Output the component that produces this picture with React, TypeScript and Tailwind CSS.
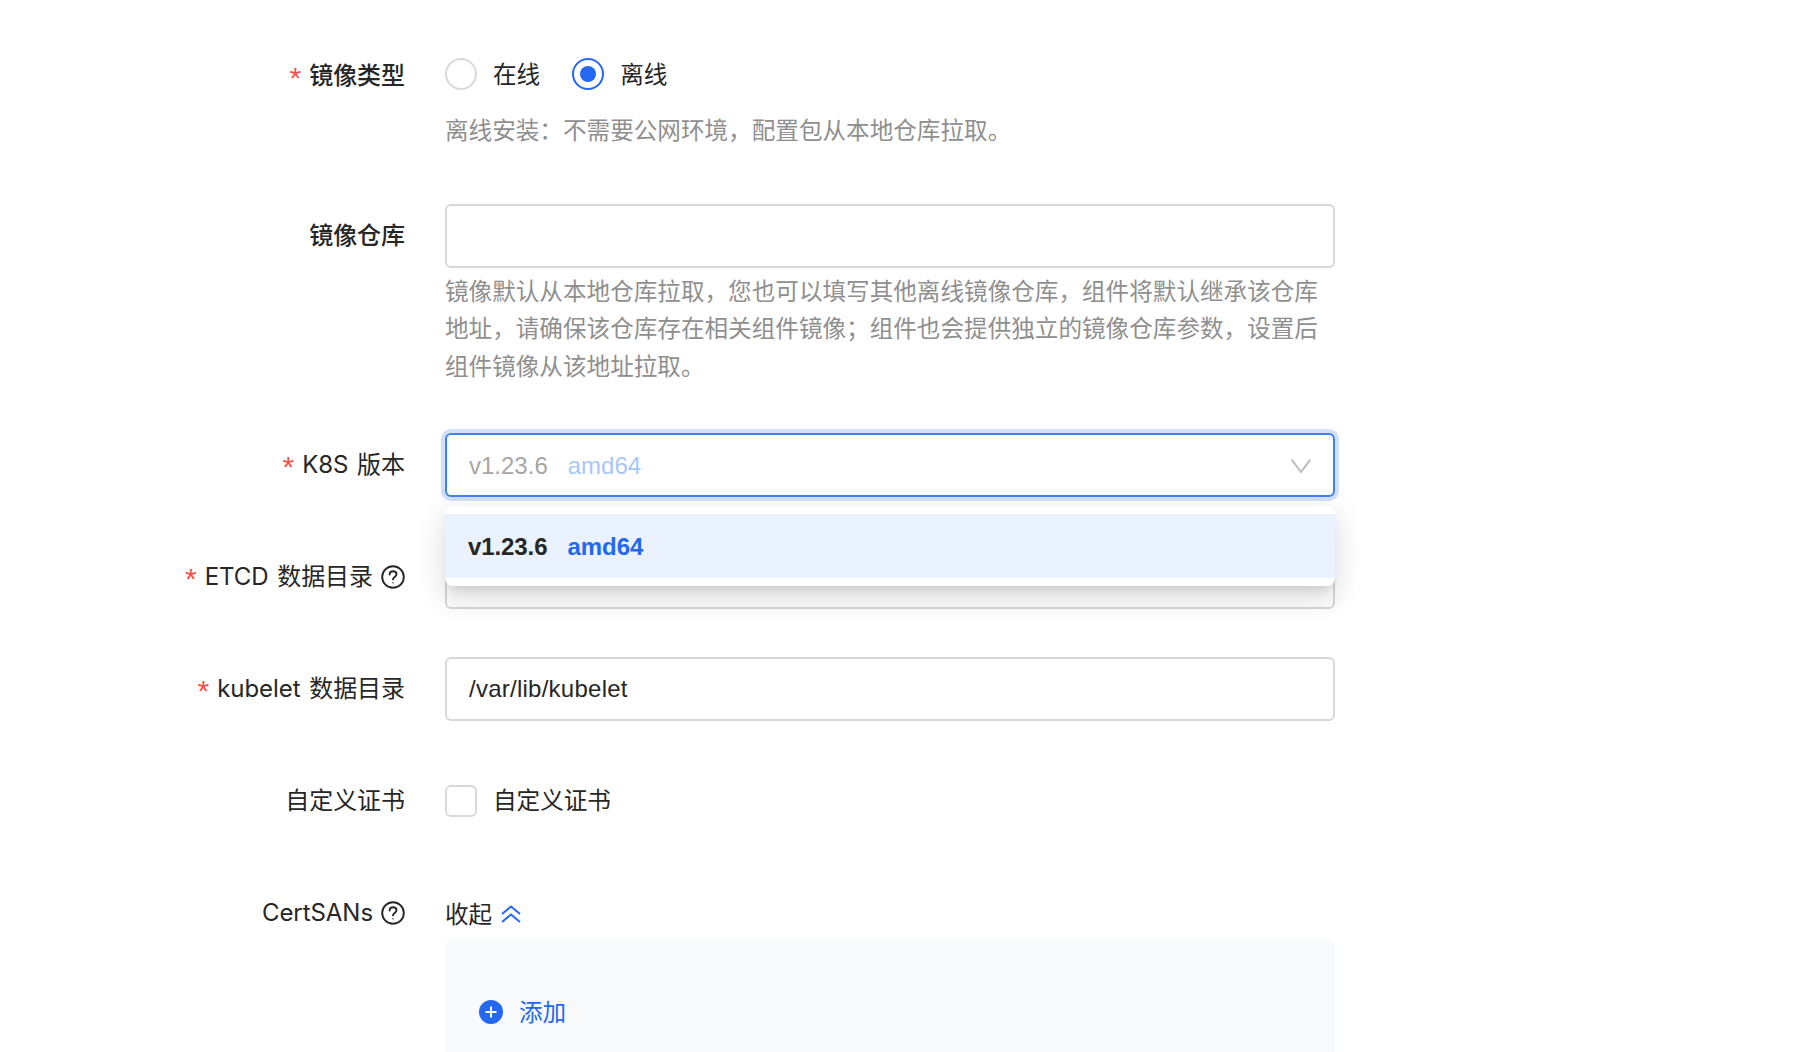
const helpIcon = (
  <svg width="24" height="24" viewBox="0 0 24 24" fill="none" stroke="#262626" strokeWidth="1.9" className="ml-[8px] shrink-0">
    <circle cx="12" cy="12" r="10.8" />
    <path d="M8.6 9.6c0-2 1.5-3.3 3.5-3.3s3.4 1.2 3.4 3c0 2.6-3.5 2.6-3.5 5.1" strokeLinecap="round" />
    <circle cx="12" cy="17.8" r="0.7" fill="#262626" stroke="none" />
  </svg>
)

function Label({ text, required, help, className }: { text: string; required?: boolean; help?: boolean; className?: string }) {
  return (
    <div className={`flex h-[64px] items-center justify-end font-['Inter','Noto_Sans_CJK_SC',sans-serif] text-[24px] tracking-[-0.05px] text-[#262626] [word-spacing:2px] ${className ?? ''}`}>
      {required && <span className="mr-[8px] mt-[5px] font-['Liberation_Sans'] text-[30px] leading-none text-[#f5524a]">*</span>}
      <span>{text}</span>
      {help && helpIcon}
    </div>
  )
}

function Row({ label, required, help, labelClass, className, children }: { label: string; required?: boolean; help?: boolean; labelClass?: string; className: string; children: React.ReactNode }) {
  return (
    <div className={`grid grid-cols-[405px_890px] gap-x-[40px] ${className}`}>
      <Label text={label} required={required} help={help} className={labelClass} />
      <div className="relative">{children}</div>
    </div>
  )
}

function Input({ value }: { value?: string }) {
  return (
    <div className="flex h-[64px] items-center rounded-[6px] border-2 border-[#d8d8d8] bg-white px-[22px] text-[24px] tracking-[0.25px] text-[#262626]">
      {value}
    </div>
  )
}

function Radio({ label, checked }: { label: string; checked?: boolean }) {
  return (
    <div className="flex items-center">
      {checked ? (
        <span className="flex h-[32px] w-[32px] items-center justify-center rounded-full border-2 border-[#2468f2]">
          <span className="h-[16px] w-[16px] rounded-full bg-[#2468f2]" />
        </span>
      ) : (
        <span className="h-[32px] w-[32px] rounded-full border-2 border-[#d9d9d9]" />
      )}
      <span className="ml-[16px] pt-[4px] text-[23.6px] text-[#262626]">{label}</span>
    </div>
  )
}

export default function App() {
  return (
    <div className="h-[1052px] overflow-hidden bg-white pt-[42px] font-['Liberation_Sans','Noto_Sans_CJK_SC',sans-serif]">
      <Row label="镜像类型" required labelClass="pt-[3px] font-medium" className="mb-[54px]">
        <div className="flex h-[64px] items-center gap-x-[32px]">
          <Radio label="在线" />
          <Radio label="离线" checked />
        </div>
        <p className="mt-[6px] text-[23.6px] leading-[38px] text-[#8f8f8f]">离线安装：不需要公网环境，配置包从本地仓库拉取。</p>
      </Row>

      <Row label="镜像仓库" labelClass="font-medium" className="mb-[46.6px]">
        <Input />
        <p className="mt-[6px] text-[23.6px] leading-[37.4px] text-[#8f8f8f]">
          镜像默认从本地仓库拉取，您也可以填写其他离线镜像仓库，组件将默认继承该仓库<br />
          地址，请确保该仓库存在相关组件镜像；组件也会提供独立的镜像仓库参数，设置后<br />
          组件镜像从该地址拉取。
        </p>
      </Row>

      <Row label="K8S 版本" required className="mb-[48px]">
        <div className="flex h-[64px] items-center justify-between rounded-[6px] border-2 border-[#3f82f5] bg-white px-[22px] pt-[2px] text-[24px] shadow-[0_0_0_4px_#d3e0fb]">
          <span>
            <span className="text-[#a6a6a6]">v1.23.6</span>
            <span className="ml-[20px] text-[#a8c6fb]">amd64</span>
          </span>
          <svg width="20" height="14" viewBox="0 0 20 14" fill="none" stroke="#bdbdbd" strokeWidth="2">
            <polyline points="0.7,0.7 10,13 19.3,0.7" />
          </svg>
        </div>
        <div className="absolute left-0 right-0 top-[73px] z-10 rounded-[8px] bg-white py-[8px] shadow-[0_6px_30px_5px_rgba(0,0,0,0.07),0_16px_24px_2px_rgba(0,0,0,0.06),0_8px_10px_-5px_rgba(0,0,0,0.12)]">
          <div className="flex h-[64px] items-center bg-[#e9f2fe] pl-[23px] pr-[24px] pt-[2px] text-[24px] font-bold">
            <span className="tracking-[-0.1px] text-[#262626]">v1.23.6</span>
            <span className="ml-[20px] text-[#2468f2]">amd64</span>
          </div>
        </div>
      </Row>

      <Row label="ETCD 数据目录" required help className="mb-[48px]">
        <Input />
      </Row>

      <Row label="kubelet 数据目录" required className="mb-[48px]">
        <Input value="/var/lib/kubelet" />
      </Row>

      <Row label="自定义证书" className="mb-[48px]">
        <div className="flex h-[64px] items-center">
          <span className="h-[32px] w-[32px] rounded-[6px] border-2 border-[#d9d9d9]" />
          <span className="ml-[16px] pt-[2px] text-[23.6px] text-[#262626]">自定义证书</span>
        </div>
      </Row>

      <Row label="CertSANs" help className="">
        <div className="flex h-[58px] items-start pt-[18px]">
          <span className="text-[23.6px] leading-[32px] text-[#262626]">收起</span>
          <svg width="20" height="18" viewBox="0 0 20 18" fill="none" stroke="#2468f2" strokeWidth="2" className="ml-[9px] mt-[6px]">
            <polyline points="1,9 10,1.5 19,9" />
            <polyline points="1,17 10,9.5 19,17" />
          </svg>
        </div>
        <div className="h-[200px] rounded-t-[6px] bg-[#f9fafc] px-[34px] pt-[56px]">
          <div className="flex items-center">
            <svg width="24" height="24" viewBox="0 0 24 24">
              <circle cx="12" cy="12" r="12" fill="#2468f2" />
              <path d="M12 6.5v11M6.5 12h11" stroke="#fff" strokeWidth="2" />
            </svg>
            <span className="ml-[16px] pt-[2px] text-[23.6px] leading-[32px] text-[#2468f2]">添加</span>
          </div>
        </div>
      </Row>
    </div>
  )
}
